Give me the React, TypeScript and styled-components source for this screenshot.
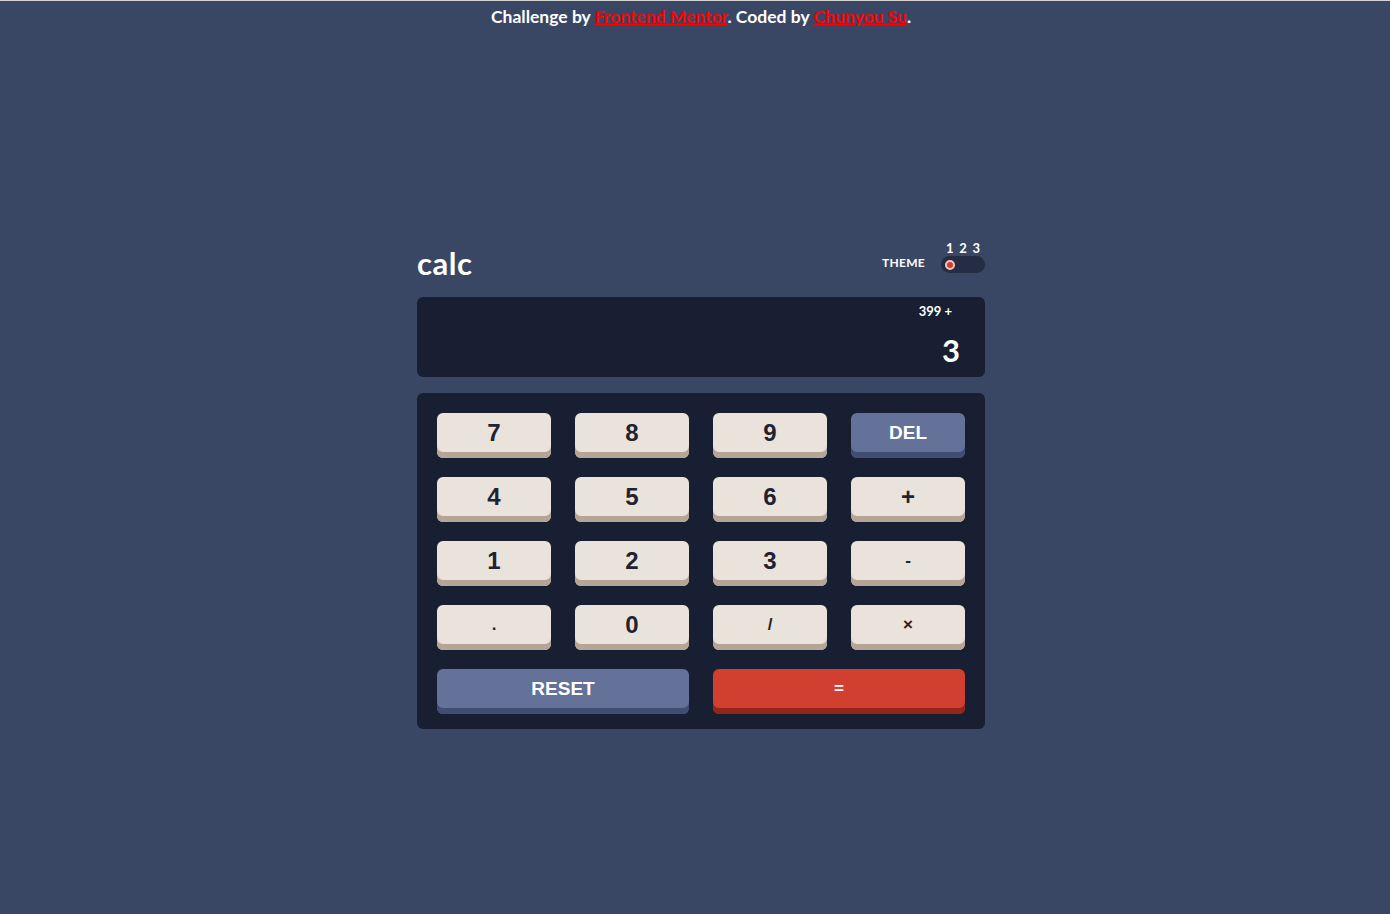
import styled, { createGlobalStyle } from 'styled-components';

const keys: { label: string; kind?: 'del' | 'op' }[] = [
    { label: '7' }, { label: '8' }, { label: '9' }, { label: 'DEL', kind: 'del' },
    { label: '4' }, { label: '5' }, { label: '6' }, { label: '+' },
    { label: '1' }, { label: '2' }, { label: '3' }, { label: '-', kind: 'op' },
    { label: '.', kind: 'op' }, { label: '0' }, { label: '/', kind: 'op' }, { label: '×', kind: 'op' },
];

function App() {
    return (
        <>
            <GlobalStyle />
            <Attribution>
                Challenge by <a href="#">Frontend Mentor</a>. Coded by <a href="#">Chunyou Su</a>.
            </Attribution>
            <Main>
                <Calculator>
                    <Header>
                        <Logo>calc</Logo>
                        <ThemeBox>
                            <ThemeLabel>THEME</ThemeLabel>
                            <ToggleWrap>
                                <Numbers>
                                    <span>1</span>
                                    <span>2</span>
                                    <span>3</span>
                                </Numbers>
                                <Toggle>
                                    <Knob />
                                </Toggle>
                            </ToggleWrap>
                        </ThemeBox>
                    </Header>
                    <Screen>
                        <Previous>399 +</Previous>
                        <Current>3</Current>
                    </Screen>
                    <Keypad>
                        {keys.map(k => (
                            <Key key={k.label} $kind={k.kind}>{k.label}</Key>
                        ))}
                        <WideKey $variant="reset">RESET</WideKey>
                        <WideKey $variant="equals">=</WideKey>
                    </Keypad>
                </Calculator>
            </Main>
        </>
    );
}

const GlobalStyle = createGlobalStyle`
    * { box-sizing: border-box; }
    body {
        margin: 0;
        padding-left: 12px;
        background: #3a4764;
        border-top: 1px solid #d4d4d4;
        font-family: "Lato", "Noto Sans", sans-serif;
        color: #fff;
        min-height: 914px;
    }
`;

const Attribution = styled.p`
    margin: 0;
    padding-top: 5px;
    text-align: center;
    font-size: 17.5px;
    font-weight: 700;
    line-height: 21px;
    a {
        color: #ff0000;
        text-decoration: underline;
    }
`;

const Main = styled.main`
    display: flex;
    justify-content: center;
    padding-top: 213px;
`;

const Calculator = styled.div`
    width: 568px;
`;

const Header = styled.header`
    display: flex;
    justify-content: space-between;
    align-items: flex-end;
    height: 40px;
    margin-bottom: 17px;
`;

const Logo = styled.h1`
    margin: 0;
    font-size: 31px;
    font-weight: 700;
    line-height: 34px;
    letter-spacing: 0.5px;
`;

const ThemeBox = styled.div`
    display: flex;
    align-items: flex-end;
    gap: 16px;
    padding-bottom: 7px;
`;

const ThemeLabel = styled.span`
    font-size: 12px;
    font-weight: 700;
    letter-spacing: 0.3px;
    line-height: 14px;
    margin-bottom: 3px;
`;

const ToggleWrap = styled.div`
    display: flex;
    flex-direction: column;
    align-items: stretch;
`;

const Numbers = styled.div`
    display: flex;
    justify-content: space-between;
    padding: 0 5px 0 5px;
    font-size: 13px;
    font-weight: 700;
    line-height: 14px;
    margin-bottom: 1px;
`;

const Toggle = styled.div`
    width: 44px;
    height: 17px;
    border-radius: 9px;
    background: #242d44;
    display: flex;
    align-items: center;
    padding-left: 4px;
`;

const Knob = styled.span`
    width: 10px;
    height: 10px;
    border-radius: 50%;
    background: #d03f2f;
    border: 2px solid #f4c3bd;
    box-shadow: inset 0 0 0 1px #d03f2f;
`;

const Screen = styled.div`
    height: 80px;
    border-radius: 6px;
    background: #181f33;
    display: flex;
    flex-direction: column;
    align-items: flex-end;
    padding: 6px 25px 0 0;
`;

const Previous = styled.div`
    font-size: 13px;
    font-weight: 700;
    line-height: 16px;
    margin-right: 8px;
`;

const Current = styled.div`
    margin-top: 13px;
    font-size: 31px;
    font-weight: 700;
    line-height: 36px;
`;

const Keypad = styled.div`
    margin-top: 16px;
    background: #181f32;
    border-radius: 6px;
    padding: 20px 20px 15px;
    display: grid;
    grid-template-columns: repeat(4, 1fr);
    column-gap: 24px;
    row-gap: 19px;
`;

const Key = styled.button<{ $kind?: 'del' | 'op' }>`
    height: 45px;
    border: none;
    border-radius: 6px;
    padding: 0 0 6px;
    cursor: pointer;
    font-family: "Liberation Sans", Arial, sans-serif;
    font-weight: 700;
    font-size: ${p => (p.$kind === 'op' ? '17px' : p.$kind === 'del' ? '19px' : '24px')};
    color: ${p => (p.$kind === 'del' ? '#ffffff' : '#1f2330')};
    background: ${p => (p.$kind === 'del' ? '#647198' : '#eae3dc')};
    box-shadow: inset 0 -6px 0 ${p => (p.$kind === 'del' ? '#414e73' : '#b4a597')};
`;

const WideKey = styled.button<{ $variant: 'reset' | 'equals' }>`
    grid-column: span 2;
    height: 45px;
    border: none;
    border-radius: 6px;
    padding: 0 0 6px;
    cursor: pointer;
    font-family: "Liberation Sans", Arial, sans-serif;
    font-weight: 700;
    font-size: ${p => (p.$variant === 'reset' ? '19px' : '17px')};
    color: #ffffff;
    background: ${p => (p.$variant === 'reset' ? '#647198' : '#d03f2f')};
    box-shadow: inset 0 -6px 0 ${p => (p.$variant === 'reset' ? '#414e73' : '#93261a')};
`;

export default App;
